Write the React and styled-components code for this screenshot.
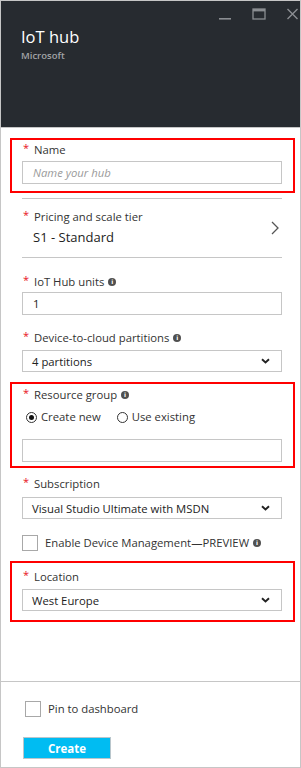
import React from "react";
import styled, { createGlobalStyle } from "styled-components";

const Global = createGlobalStyle`
  html, body { margin: 0; padding: 0; background: #fff; }
  body { font-family: "Open Sans", "Noto Sans", Arial, sans-serif; }
  * { box-sizing: border-box; }
`;

const Panel = styled.div`
  width: 301px;
  height: 768px;
  border: 1px solid #c6c6c6;
  display: flex;
  flex-direction: column;
  background: #fff;
`;

const Header = styled.header`
  height: 127px;
  background: #272b30;
  border-bottom: 1px solid #c6c6c6;
  padding: 7px 1px 0 20px;
  display: flex;
  flex-direction: column;
`;

const Controls = styled.div`
  display: flex;
  justify-content: flex-end;
  align-items: flex-start;
  gap: 20px;
  height: 13px;
  color: #8b8e92;
`;

const Title = styled.h1`
  margin: 5px 0 0;
  font-weight: 400;
  font-size: 16.5px;
  line-height: 22px;
  color: #fff;
`;

const Publisher = styled.div`
  margin-top: 2px;
  font-size: 9.5px;
  line-height: 12px;
  color: #a2a4a7;
  font-weight: 600;
`;

const Body = styled.main`
  flex: 1;
  padding: 10px 18px 0 21px;
  display: flex;
  flex-direction: column;
`;

const Highlight = styled.section`
  margin: ${(p) => p.$mt}px -13px 0 -12px;
  border: 2px solid #f00;
  padding: ${(p) => p.$pt}px 11px ${(p) => p.$pb}px 10px;
  display: flex;
  flex-direction: column;
`;

const Label = styled.div`
  margin-top: ${(p) => p.$mt || 0}px;
  display: flex;
  align-items: center;
  gap: 4px;
  font-size: 11.3px;
  line-height: 16px;
  color: #333;
  white-space: nowrap;
`;

const Star = styled.span`
  color: #e81123;
  font-size: 11px;
  width: 7px;
  margin-left: 1px;
  align-self: flex-start;
  line-height: 12px;
`;

const Info = styled.span`
  display: inline-flex;
  align-items: center;
  justify-content: center;
  width: 8px;
  height: 8px;
  margin-left: ${(p) => p.$ml || 0}px;
  border-radius: 50%;
  background: #505050;
  color: #fff;
  font-size: 6px;
  font-weight: 700;
  line-height: 8px;
  font-family: "DejaVu Sans", sans-serif;
`;

const TextInput = styled.div`
  margin-top: ${(p) => p.$mt || 0}px;
  height: 23px;
  border: 1px solid #c6c6c6;
  padding: 0 10px;
  display: flex;
  align-items: center;
  font-size: 11.3px;
  color: #222;
`;

const Placeholder = styled.span`
  font-style: italic;
  color: #9a9a9a;
`;

const Select = styled.div`
  margin-top: ${(p) => p.$mt || 0}px;
  height: 22px;
  border: 1px solid #c6c6c6;
  padding: 0 11px 0 9px;
  display: flex;
  align-items: center;
  justify-content: space-between;
  font-size: 11.3px;
  color: #222;
`;

const Divider = styled.hr`
  margin: ${(p) => p.$mt}px 0 0;
  border: 0;
  border-top: 1px solid #c6c6c6;
  height: 0;
`;

const Tier = styled.div`
  margin-top: 10px;
  display: flex;
  align-items: center;
  justify-content: space-between;
  padding-right: 3px;
`;

const TierText = styled.div`
  display: flex;
  flex-direction: column;
`;

const TierValue = styled.div`
  margin-top: 3px;
  padding-left: 11px;
  font-size: 13px;
  line-height: 18px;
  color: #222;
`;

const RadioRow = styled.div`
  margin-top: 6px;
  display: flex;
  align-items: center;
  gap: 16px;
  padding-left: 4px;
  font-size: 11.3px;
  line-height: 16px;
  color: #333;
`;

const RadioOption = styled.label`
  display: flex;
  align-items: center;
  gap: 4px;
`;

const RadioDot = styled.span`
  width: 11px;
  height: 11px;
  border-radius: 50%;
  border: 1px solid #333;
  display: flex;
  align-items: center;
  justify-content: center;
  &::after {
    content: "";
    width: 5px;
    height: 5px;
    border-radius: 50%;
    background: ${(p) => (p.$on ? "#111" : "transparent")};
  }
`;

const CheckRow = styled.label`
  margin-top: ${(p) => p.$mt}px;
  padding-left: ${(p) => p.$pl || 0}px;
  display: flex;
  align-items: center;
  gap: 7px;
  font-size: 11.3px;
  line-height: 16px;
  color: #333;
  white-space: nowrap;
`;

const CheckText = styled.span`
  display: flex;
  align-items: center;
`;

const Box = styled.span`
  width: 16px;
  height: 16px;
  border: 1px solid #a8a8a8;
  background: #fff;
  flex: none;
`;

const Footer = styled.footer`
  height: 86px;
  border-top: 1px solid #c6c6c6;
  padding: 19px 0 0 22px;
  display: flex;
  flex-direction: column;
  align-items: flex-start;
`;

const CreateButton = styled.button`
  margin-top: 20px;
  width: 88px;
  height: 22px;
  background: #00bcf2;
  border: 1px solid #b9c6cc;
  color: #fff;
  font-family: inherit;
  font-weight: 700;
  font-size: 11.5px;
  padding: 0;
  cursor: pointer;
`;

const Chevron = () => (
  <svg width="9" height="6" viewBox="0 0 9 6">
    <path d="M1 1.3 L4.5 4.5 L8 1.3" fill="none" stroke="#222" strokeWidth="1.9" />
  </svg>
);

export default function App() {
  return (
    <>
      <Global />
      <Panel>
        <Header>
          <Controls>
            <svg width="14" height="13" viewBox="0 0 14 13">
              <rect x="1" y="10" width="12" height="1.6" fill="currentColor" />
            </svg>
            <svg width="14" height="12" viewBox="0 0 14 12">
              <rect x="1" y="1" width="12" height="10" fill="none" stroke="currentColor" strokeWidth="1.3" />
              <rect x="1" y="1" width="12" height="2.4" fill="currentColor" />
            </svg>
            <svg width="13" height="12" viewBox="0 0 13 12">
              <path d="M1.5 1 L11.5 11 M11.5 1 L1.5 11" stroke="currentColor" strokeWidth="1.4" />
            </svg>
          </Controls>
          <Title>IoT hub</Title>
          <Publisher>Microsoft</Publisher>
        </Header>

        <Body>
          <Highlight $mt={0} $pt={2} $pb={7}>
            <Label><Star>*</Star>Name</Label>
            <TextInput $mt={3}><Placeholder>Name your hub</Placeholder></TextInput>
          </Highlight>

          <Divider $mt={5} />
          <Tier>
            <TierText>
              <Label><Star>*</Star>Pricing and scale tier</Label>
              <TierValue>S1 - Standard</TierValue>
            </TierText>
            <svg width="8" height="14" viewBox="0 0 8 14">
              <path d="M1 1 L7 7 L1 13" fill="none" stroke="#555" strokeWidth="1.3" />
            </svg>
          </Tier>
          <Divider $mt={11} />

          <Label $mt={16}><Star>*</Star>IoT Hub units<Info>i</Info></Label>
          <TextInput $mt={2}>1</TextInput>

          <Label $mt={15}><Star>*</Star>Device-to-cloud partitions<Info>i</Info></Label>
          <Select $mt={4}>4 partitions<Chevron /></Select>

          <Highlight $mt={10} $pt={3} $pb={4}>
            <Label><Star>*</Star>Resource group<Info>i</Info></Label>
            <RadioRow>
              <RadioOption><RadioDot $on />Create new</RadioOption>
              <RadioOption><RadioDot />Use existing</RadioOption>
            </RadioRow>
            <TextInput $mt={14} />
          </Highlight>

          <Label $mt={8}><Star>*</Star>Subscription</Label>
          <Select $mt={5}>Visual Studio Ultimate with MSDN<Chevron /></Select>

          <CheckRow $mt={16}>
            <Box />
            <CheckText>
              Enable Device Management—PREVIEW
              <Info $ml={4}>i</Info>
            </CheckText>
          </CheckRow>

          <Highlight $mt={10} $pt={6} $pb={9}>
            <Label><Star>*</Star>Location</Label>
            <Select $mt={4}>West Europe<Chevron /></Select>
          </Highlight>
        </Body>

        <Footer>
          <CheckRow $mt={0} $pl={2}>
            <Box />
            <span>Pin to dashboard</span>
          </CheckRow>
          <CreateButton>Create</CreateButton>
        </Footer>
      </Panel>
    </>
  );
}
